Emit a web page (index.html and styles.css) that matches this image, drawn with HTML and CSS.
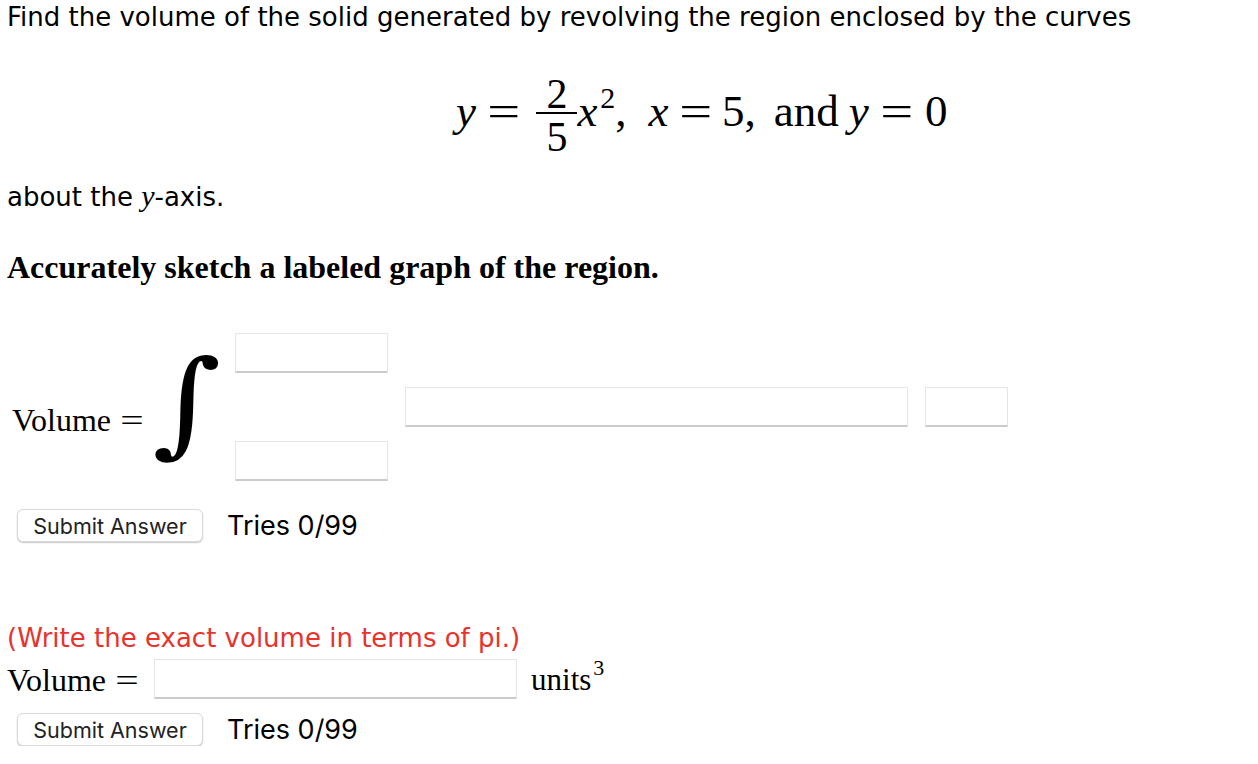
FILE: index.html
```html
<!DOCTYPE html>
<html>
<head>
<meta charset="utf-8">
<link rel="stylesheet" href="styles.css">
</head>
<body>
<div class="page">
  <p class="intro">Find the volume of the solid generated by revolving the region enclosed by the curves</p>
  <div class="display"><span class="eq"><span class="mi">y</span><span class="mo">=</span><span class="frac"><span class="num">2</span><span class="den">5</span></span><span class="mi">x</span><sup class="sq">2</sup><span class="comma">,</span><span class="mi">x</span><span class="mo mo2">=</span><span class="mn">5</span><span class="comma comma2">,</span><span class="mt">and</span><span class="mi">y</span><span class="mo">=</span><span class="mn">0</span></span></div>
  <p class="about">about the <span class="var">y</span>-axis.</p>
  <p class="bold">Accurately sketch a labeled graph of the region.</p>

  <div class="integral-row">
    <span class="vol-label">Volume<span class="eqs">=</span></span>
    <span class="int-sign">∫</span>
    <div class="limits">
      <input class="box lim" type="text">
      <input class="box lim" type="text">
    </div>
    <input class="box integrand" type="text">
    <input class="box dvar" type="text">
  </div>

  <div class="submit-row">
    <button class="submit">Submit Answer</button>
    <span class="tries">Tries 0/99</span>
  </div>

  <p class="note">(Write the exact volume in terms of pi.)</p>
  <div class="answer-row">
    <span class="vol-label2">Volume<span class="eqs">=</span></span>
    <input class="box answer" type="text">
    <span class="units">units<sup>3</sup></span>
  </div>
  <div class="submit-row second">
    <button class="submit">Submit Answer</button>
    <span class="tries">Tries 0/99</span>
  </div>
</div>
</body>
</html>
```
FILE: styles.css
```css
html, body {
  margin: 0;
  padding: 0;
  background: #fff;
  color: #000;
}
.page {
  padding: 0 7px;
  font-family: "DejaVu Sans", Verdana, sans-serif;
}
.intro {
  margin: 0;
  padding-top: 2px;
  font-size: 26px;
  line-height: 30px;
}
.display {
  font-family: "Liberation Serif", "Times New Roman", serif;
  font-size: 45px;
  line-height: 36px;
  margin-top: 44px;
  padding-left: 449px;
  white-space: nowrap;
}
.mi { font-style: italic; }
.mo {
  display: inline-block;
  transform: scaleX(1.3);
  margin: 0 16px 0 15px;
}
.mo2 { margin: 0 14px 0 14px; }
.frac {
  display: inline-flex;
  flex-direction: column;
  align-items: center;
  vertical-align: 18px;
  margin: 0 0 0 4px;
  font-size: 42px;
}
.num {
  line-height: 36px;
  padding: 0 10px;
  border-bottom: 2px solid #000;
}
.den {
  line-height: 36px;
  padding-top: 5px;
}
.sq {
  font-size: 30px;
  vertical-align: 18px;
  line-height: 0;
  margin-left: 3px;
}
.comma { margin-right: 22px; }
.comma2 { margin-right: 18px; }
.mt { margin-right: 10px; }

.about {
  margin: 27px 0 0 0;
  font-size: 26px;
  line-height: 30px;
}
.var {
  font-family: "Liberation Serif", "Times New Roman", serif;
  font-style: italic;
  font-size: 30px;
  line-height: 0;
}
.bold {
  margin: 37px 0 0 0;
  font-family: "Liberation Serif", "Times New Roman", serif;
  font-weight: bold;
  font-size: 32px;
  line-height: 36px;
}
.integral-row {
  display: flex;
  align-items: center;
  margin-top: 48px;
}
.vol-label, .vol-label2 {
  font-family: "Liberation Serif", "Times New Roman", serif;
  font-size: 32px;
  line-height: 36px;
  white-space: nowrap;
}
.vol-label {
  margin-left: 5px;
  margin-top: 26px;
}
.eqs {
  display: inline-block;
  transform: scaleX(1.3);
  margin-left: 12px;
  margin-right: 3px;
}
.int-sign {
  display: inline-block;
  font-family: "DejaVu Serif", "Liberation Serif", serif;
  font-size: 115px;
  line-height: 1;
  margin-left: 13px;
  margin-top: -10px;
  font-style: italic;
  transform: scaleX(1.15);
}
.limits {
  display: flex;
  flex-direction: column;
  gap: 68px;
  margin-left: 18px;
}
.box {
  box-sizing: border-box;
  height: 40px;
  border: 1px solid #e6e6e6;
  border-bottom: 2px solid #cbcbcb;
  border-radius: 1px;
  background: #fff;
  padding: 0;
  margin: 0;
  outline: none;
}
.lim { width: 153px; }
.integrand { width: 503px; margin-left: 17px; }
.dvar { width: 83px; margin-left: 17px; }

.submit-row {
  display: flex;
  align-items: center;
  margin-top: 28px;
  padding-left: 10px;
}
.submit {
  box-sizing: border-box;
  width: 186px;
  height: 33px;
  font-family: Inter, "Liberation Sans", Arial, sans-serif;
  font-size: 21.5px;
  color: #222;
  background: #fff;
  border: 1px solid #d9d9d9;
  border-radius: 6px;
  box-shadow: 0 1px 1.5px rgba(0,0,0,0.22);
  padding: 0;
}
.tries {
  font-family: Inter, "Liberation Sans", Arial, sans-serif;
  font-size: 27px;
  margin-left: 24px;
}
.note {
  margin: 81px 0 0 0;
  color: #e8322b;
  font-size: 26px;
  line-height: 30px;
}
.answer-row {
  display: flex;
  align-items: center;
  margin-top: 6px;
}
.vol-label2 { margin-top: 2px; }
.answer { width: 363px; margin-left: 15px; }
.units {
  font-family: "Liberation Serif", "Times New Roman", serif;
  font-size: 31px;
  line-height: 36px;
  margin-left: 14px;
  margin-top: 2px;
}
.units sup { font-size: 22px; vertical-align: 15px; line-height: 0; margin-left: 2px; }
.second { margin-top: 14px; }
```
